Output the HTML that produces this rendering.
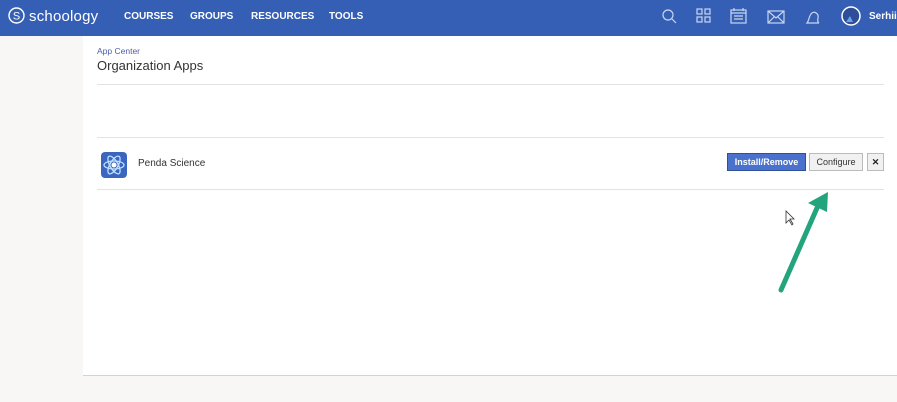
<!DOCTYPE html>
<html><head><style>
*{margin:0;padding:0;box-sizing:border-box}
body{width:897px;height:402px;overflow:hidden;background:#f8f7f5;font-family:"Liberation Sans",sans-serif;position:relative}
.hdr{position:absolute;left:0;top:0;width:897px;height:36px;background:#345fb4;color:#fff}
.nav{position:absolute;top:11px;font-weight:bold;font-size:10px}
.main{position:absolute;left:83px;top:36px;width:814px;height:340px;background:#fff;border-bottom:1px solid #d3d3d3}
.line{position:absolute;left:14px;width:787px;height:1px;background:#e3e3e3}
.btn{position:absolute;top:117px;height:18px;font-size:9px;line-height:16px;text-align:center}
</style></head><body>
<div class="hdr">
<svg style="position:absolute;left:8px;top:7px" width="17" height="17"><circle cx="8.5" cy="8.5" r="7.5" fill="none" stroke="#fff" stroke-width="1.4"/><text x="8.5" y="12.5" font-size="11" fill="#fff" text-anchor="middle" font-family="Liberation Sans">S</text></svg>
<div style="position:absolute;left:29px;top:8px;font-size:15px;letter-spacing:0.2px">schoology</div>
<div class="nav" style="left:124px">COURSES</div>
<div class="nav" style="left:190px">GROUPS</div>
<div class="nav" style="left:251px">RESOURCES</div>
<div class="nav" style="left:329px">TOOLS</div>
<svg style="position:absolute;left:660px;top:6px" width="237" height="24" fill="none" stroke="#c9d6f0" stroke-width="1.2">
<circle cx="8" cy="9" r="5"/><path d="M12 13l4 4"/>
<rect x="37" y="3" width="5" height="5"/><rect x="45" y="3" width="5" height="5"/><rect x="37" y="11" width="5" height="5"/><rect x="45" y="11" width="5" height="5"/>
<rect x="71" y="4" width="15" height="13"/><path d="M71 7h15M74 2v3M83 2v3M74 10h9M74 13h9"/>
<rect x="108" y="5" width="16" height="12"/><path d="M108 5l8 7 8-7M108 17l6-6M124 17l-6-6"/>
<path d="M147 17c2-2 2-8 5-10s7 1 6 5 1 5 1 5z"/>
<circle cx="191" cy="10" r="9" fill="#2d4f9a" stroke="#fff" stroke-width="1.5"/><path d="M186 16l4-6 3 6z" fill="#6fa0e8" stroke="none"/>
</svg>
<div style="position:absolute;left:869px;top:11px;font-size:10px;font-weight:bold">Serhii</div>
</div>
<div class="main">
<div style="position:absolute;left:14px;top:10px;font-size:8.5px;color:#4a5ea8">App Center</div>
<div style="position:absolute;left:14px;top:22px;font-size:13px;color:#333">Organization Apps</div>
<div class="line" style="top:48px"></div>
<div class="line" style="top:101px"></div>
<div class="line" style="top:153px"></div>
<svg style="position:absolute;left:18px;top:116px" width="26" height="26"><rect width="26" height="26" rx="4" fill="#3a66c0"/><g fill="none" stroke="#bfe0ff" stroke-width="1.3"><ellipse cx="13" cy="13" rx="10" ry="4"/><ellipse cx="13" cy="13" rx="10" ry="4" transform="rotate(60 13 13)"/><ellipse cx="13" cy="13" rx="10" ry="4" transform="rotate(-60 13 13)"/></g><circle cx="13" cy="13" r="2.5" fill="#fff"/></svg>
<div style="position:absolute;left:55px;top:122px;font-size:10px;color:#333">Penda Science</div>
<div class="btn" style="left:644px;width:79px;background:#4a72cc;border:1px solid #2f4f9a;color:#fff;font-weight:bold">Install/Remove</div>
<div class="btn" style="left:726px;width:54px;background:#f1f1f1;border:1px solid #bbb;color:#333">Configure</div>
<div class="btn" style="left:784px;width:17px;background:#f1f1f1;border:1px solid #bbb;color:#222;font-weight:bold">✕</div>
<svg style="position:absolute;left:690px;top:150px" width="60" height="120"><path d="M8 104L44 22" stroke="#23a47c" stroke-width="5" stroke-linecap="round"/><path d="M55 6L35 17 54 26z" fill="#23a47c"/><path d="M13 25v12l3-3 3 5 1-1-3-5h4z" fill="#fff" stroke="#333" stroke-width="0.8"/></svg>
</div>
</body></html>
